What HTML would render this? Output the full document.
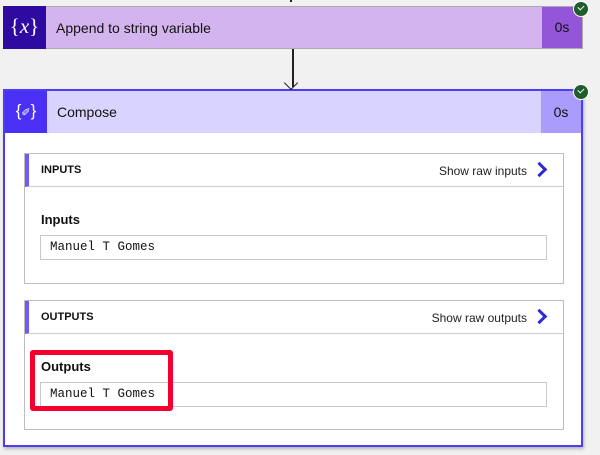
<!DOCTYPE html>
<html><head><style>
body{margin:0;width:600px;height:455px;background:#f1f1f1;font-family:"Liberation Sans",sans-serif;position:relative;overflow:hidden}
.a{position:absolute}
.chk{position:absolute;width:14px;height:14px;border-radius:50%;background:#1f5e2a;border:1px solid #fff}
.chk:after{content:"";position:absolute;left:4px;top:3px;width:5px;height:3px;border-left:1.5px solid #fff;border-bottom:1.5px solid #fff;transform:rotate(-45deg)}
.box{position:absolute;left:24px;width:538px;border:1px solid #bdbdbd;background:#fff}
.hd{height:32px;border-bottom:1px solid #ccc;border-left:4px solid #6a5cf6;position:relative}
.hd b{position:absolute;left:12px;top:10px;font-size:11px;color:#111}
.hd span{position:absolute;right:36px;top:10px;font-size:12px;color:#222}
.chev{position:absolute;right:18px;top:10px;width:8px;height:8px;border-right:3px solid #2b2bd6;border-top:3px solid #2b2bd6;transform:rotate(45deg)}
.lbl{position:absolute;left:16px;font-size:13px;font-weight:bold;color:#111}
.tb{position:absolute;left:15px;width:507px;height:25px;border:1px solid #c8c8c8;font-family:"Liberation Mono",monospace;font-size:12.5px;line-height:23px;padding-left:9px;box-sizing:border-box;color:#111}
</style></head><body>
<div class="a" style="left:290px;top:0;width:2px;height:2px;background:#222"></div>
<div class="a" style="left:3px;top:6px;width:580px;height:43px;background:#d4b4ee;border:1px solid #aaa;box-sizing:border-box"></div>
<div class="a" style="left:3px;top:6px;width:43px;height:43px;background:#2f0aa0;color:#fff;font-family:'Liberation Serif',serif;font-size:21px;line-height:40px;text-align:center;font-style:normal">{<i>x</i>}</div>
<div class="a" style="left:56px;top:20px;font-size:14px;color:#111">Append to string variable</div>
<div class="a" style="left:542px;top:7px;width:40px;height:41px;background:#9456d9;font-size:14px;line-height:41px;text-align:center;color:#111">0s</div>
<div class="chk" style="left:573px;top:1px"></div>
<div class="a" style="left:3px;top:89px;width:580px;height:358px;border:2px solid #4f3cf5;box-sizing:border-box;background:#fff;box-shadow:1px 2px 3px rgba(0,0,0,.25)"></div>
<div class="a" style="left:292px;top:49px;width:1.5px;height:38px;background:#222"></div>
<div class="a" style="left:286px;top:78px;width:9px;height:9px;border-right:1.5px solid #222;border-bottom:1.5px solid #222;transform:rotate(45deg)"></div>
<div class="a" style="left:5px;top:91px;width:576px;height:42px;background:#d9d3ff"></div>
<div class="a" style="left:5px;top:91px;width:42px;height:42px;background:#4a30f4;color:#fff;font-size:17px;line-height:40px;text-align:center">{<span style="font-size:11px">✐</span>}</div>
<div class="a" style="left:57px;top:104px;font-size:14px;color:#111">Compose</div>
<div class="a" style="left:541px;top:91px;width:40px;height:42px;background:#a99cfc;font-size:14px;line-height:42px;text-align:center;color:#111">0s</div>
<div class="chk" style="left:573px;top:84px"></div>
<div class="box" style="top:153px;height:129px">
<div class="hd"><b>INPUTS</b><span>Show raw inputs</span><div class="chev"></div></div>
<div class="lbl" style="top:58px">Inputs</div>
<div class="tb" style="top:81px">Manuel T Gomes</div>
</div>
<div class="box" style="top:300px;height:128px">
<div class="hd"><b>OUTPUTS</b><span>Show raw outputs</span><div class="chev"></div></div>
<div class="lbl" style="top:58px">Outputs</div>
<div class="tb" style="top:81px">Manuel T Gomes</div>
</div>
<div class="a" style="left:30px;top:350px;width:143px;height:61px;border:5px solid #f5002e;border-radius:3px;box-sizing:border-box"></div>
</body></html>
